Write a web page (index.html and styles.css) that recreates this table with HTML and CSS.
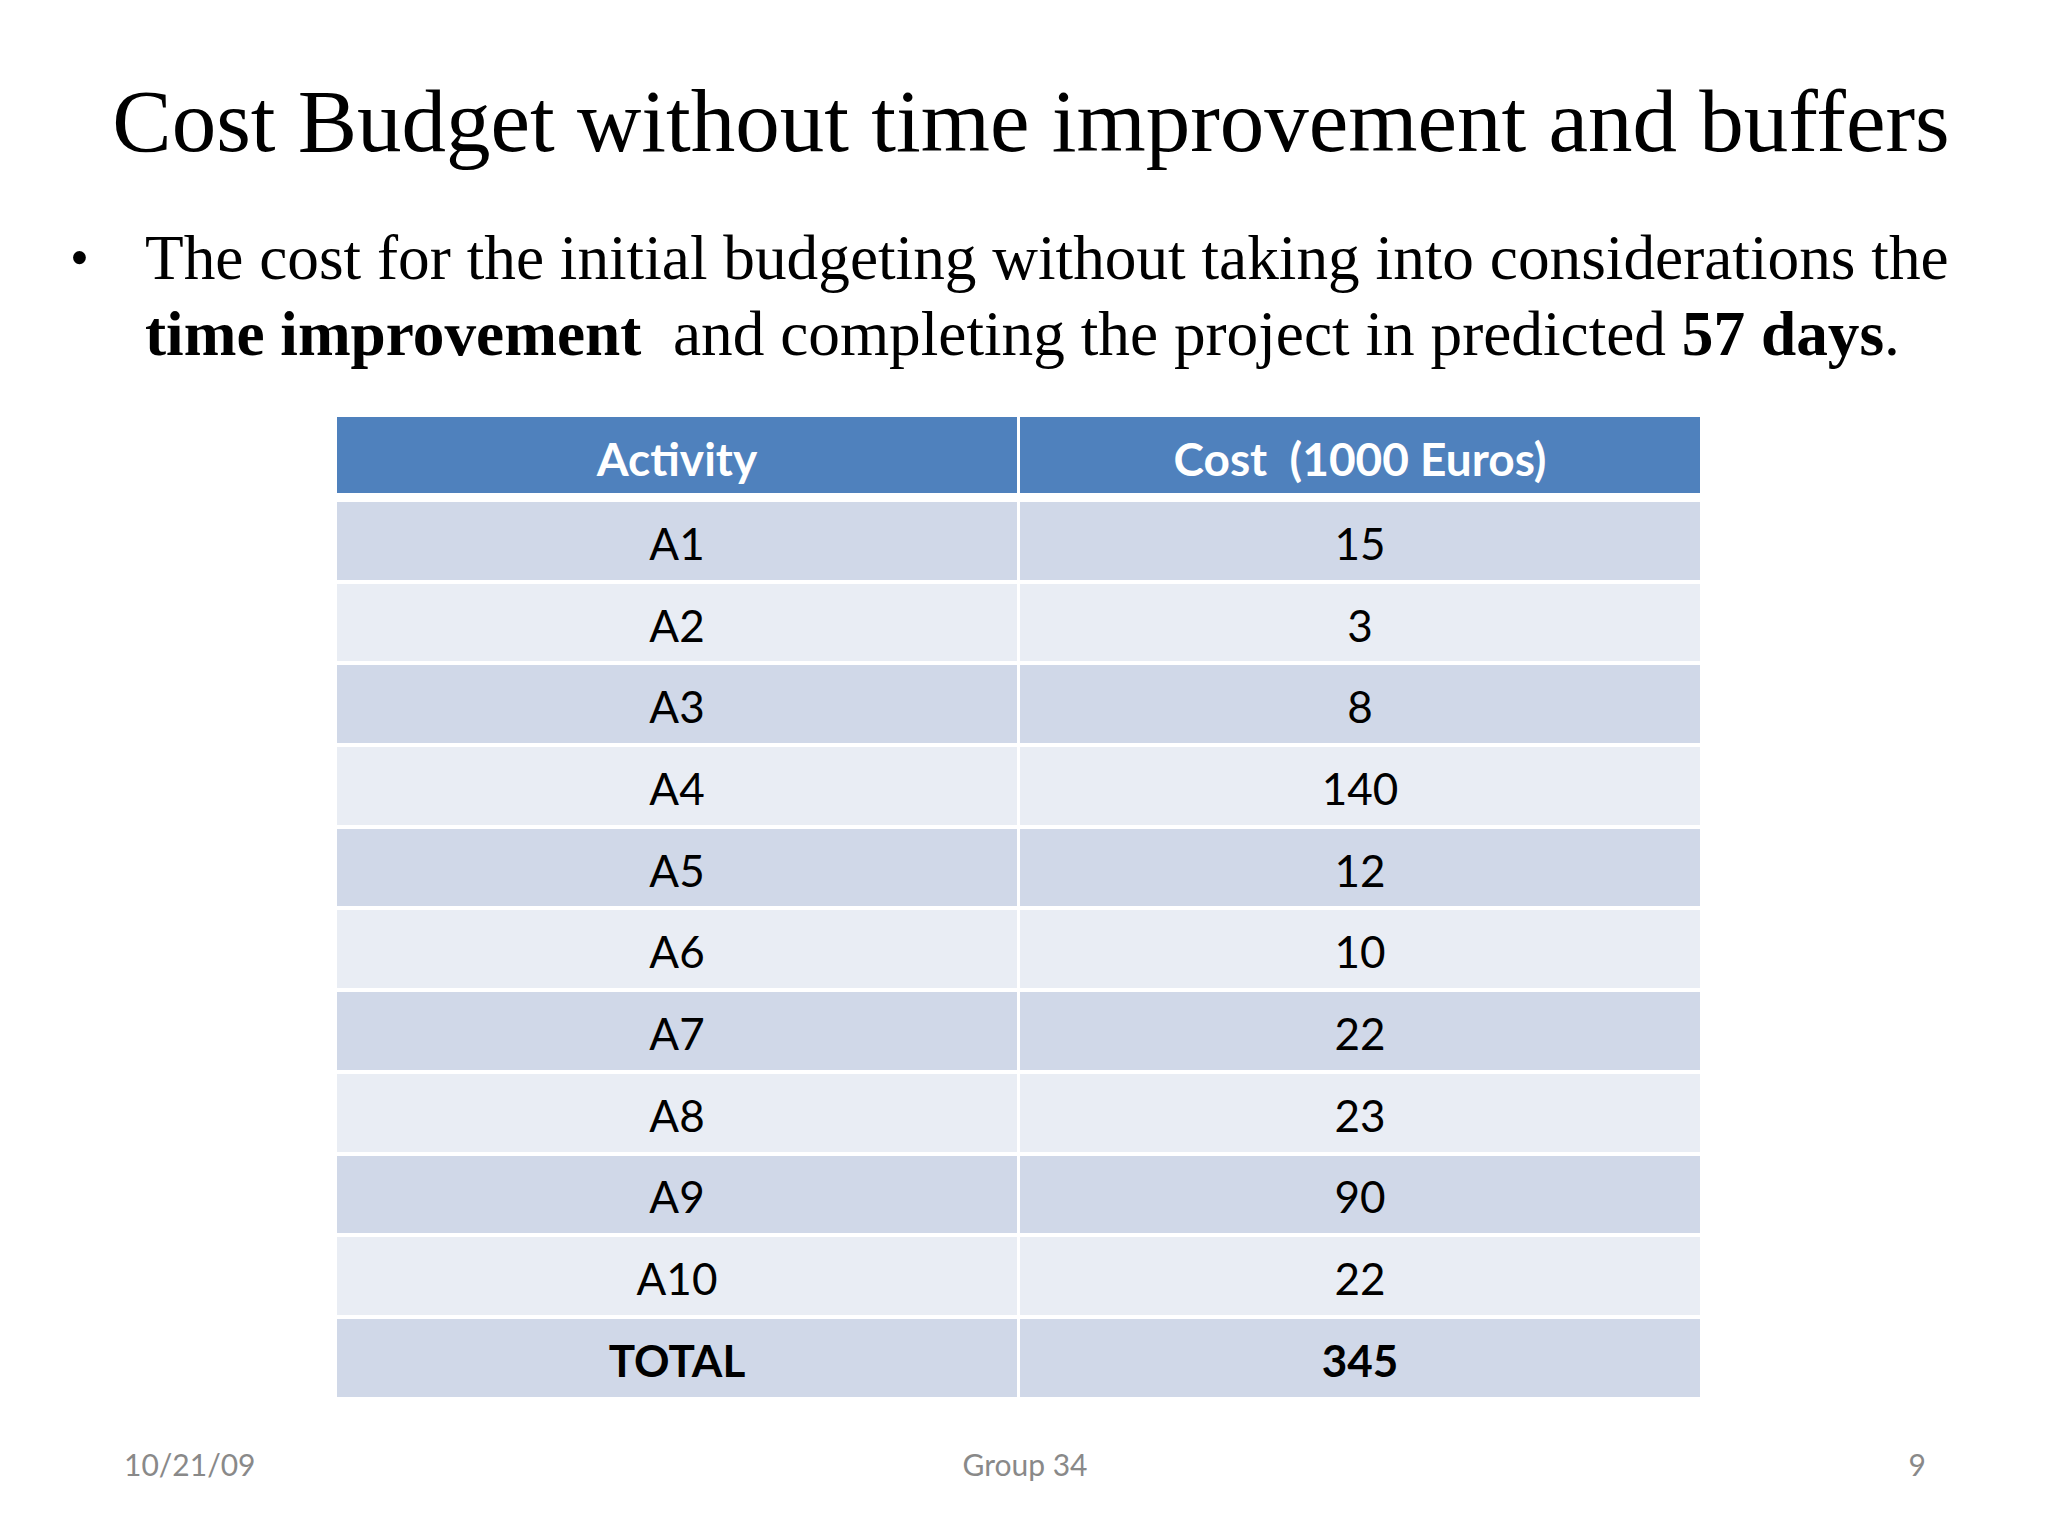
FILE: index.html
```html
<!DOCTYPE html>
<html lang="en">
<head>
<meta charset="utf-8">
<title>Cost Budget without time improvement and buffers</title>
<link rel="stylesheet" href="styles.css">
</head>
<body>
<div class="slide">
  <h1 class="title">Cost Budget without time improvement and buffers</h1>
  <div class="bullet-list">
    <div class="bullet">
      <span class="dot">•</span>
      <p class="bullet-text">The cost for the initial budgeting without taking into considerations the <b>time improvement</b>&nbsp; and completing the project in predicted <b>57 days</b>.</p>
    </div>
  </div>
  <div class="table">
    <div class="cell head">Activity</div>
    <div class="cell head">Cost&nbsp; (1000 Euros)</div>
    <div class="cell odd">A1</div><div class="cell odd">15</div>
    <div class="cell even">A2</div><div class="cell even">3</div>
    <div class="cell odd">A3</div><div class="cell odd">8</div>
    <div class="cell even">A4</div><div class="cell even">140</div>
    <div class="cell odd">A5</div><div class="cell odd">12</div>
    <div class="cell even">A6</div><div class="cell even">10</div>
    <div class="cell odd">A7</div><div class="cell odd">22</div>
    <div class="cell even">A8</div><div class="cell even">23</div>
    <div class="cell odd">A9</div><div class="cell odd">90</div>
    <div class="cell even">A10</div><div class="cell even">22</div>
    <div class="cell total">TOTAL</div><div class="cell total">345</div>
  </div>
  <div class="footer">
    <span class="f-date">10/21/09</span>
    <span class="f-center">Group 34</span>
    <span class="f-num">9</span>
  </div>
</div>
</body>
</html>
```

FILE: styles.css
```css
html, body {
  margin: 0;
  padding: 0;
  background: #ffffff;
}
.slide {
  width: 2048px;
  height: 1536px;
  display: flex;
  flex-direction: column;
  overflow: hidden;
  color: #000;
}
.title {
  margin: 0;
  padding-top: 76px;
  padding-left: 14px;
  font-family: "Liberation Serif", serif;
  font-weight: normal;
  font-size: 89px;
  line-height: 90px;
  text-align: center;
}
.bullet-list {
  margin-top: 54px;
  padding-left: 70px;
  padding-right: 60px;
}
.bullet {
  display: flex;
  align-items: flex-start;
}
.dot {
  font-family: "Liberation Serif", serif;
  font-size: 54px;
  line-height: 76px;
  width: 75px;
  flex: none;
}
.bullet-text {
  margin: 0;
  font-family: "Liberation Serif", serif;
  font-size: 63.3px;
  line-height: 76px;
}
.bullet-text b {
  font-weight: bold;
}
.table {
  margin-top: 45px;
  margin-left: 337px;
  width: 1363px;
  display: grid;
  grid-template-columns: 680px 680px;
  grid-template-rows: 81px repeat(11, 77.7px);
  column-gap: 3px;
  row-gap: 4px;
}
.cell {
  display: flex;
  align-items: center;
  justify-content: center;
  padding-top: 4px;
  box-sizing: border-box;
  font-family: Lato, "Liberation Sans", sans-serif;
  font-size: 44px;
  color: #000;
}
.head {
  background: #4f81bd;
  color: #ffffff;
  font-weight: bold;
  font-size: 46px;
  padding-top: 7px;
  margin-bottom: 5px;
}
.odd { background: #d0d8e8; }
.even { background: #e9edf4; }
.total { background: #d0d8e8; font-weight: bold; }
.footer {
  margin-top: 47px;
  display: grid;
  grid-template-columns: 1fr 1fr 1fr;
  padding: 0 122px 0 124px;
  font-family: Lato, "Liberation Sans", sans-serif;
  font-size: 30px;
  line-height: 40px;
  color: #898989;
}
.f-date { text-align: left; }
.f-center { text-align: center; }
.f-num { text-align: right; }
```
